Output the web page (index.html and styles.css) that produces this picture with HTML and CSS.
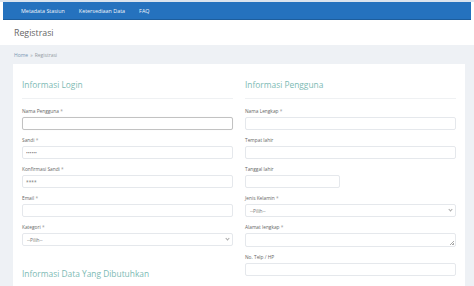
FILE: index.html
```html
<!DOCTYPE html>
<html lang="id">
<head>
    <meta charset="UTF-8">
    <meta name="viewport" content="width=device-width, initial-scale=1.0">
    <title>Registrasi</title>
    <link rel="stylesheet" href="styles.css">
</head>
<body>
    <header class="site-header">
        <nav class="navbar">
            <a class="nav-link" href="#">Metadata Stasiun</a>
            <a class="nav-link" href="#">Ketersediaan Data</a>
            <a class="nav-link" href="#">FAQ</a>
        </nav>
    </header>

    <div class="page-title">
        <h1>Registrasi</h1>
    </div>

    <main class="page-body">
        <div class="breadcrumb">
            <a href="#">Home</a> <span class="sep">»</span> <span>Registrasi</span>
        </div>

        <div class="card">
            <form class="form-grid">
                <!-- kolom kiri -->
                <section class="form-col">
                    <h3 class="section-title">Informasi Login</h3>
                    <div class="field">
                        <label>Nama Pengguna <span class="req">*</span></label>
                        <input class="form-control focused" type="text">
                    </div>
                    <div class="field">
                        <label>Sandi <span class="req">*</span></label>
                        <input class="form-control" type="password" value="123456">
                    </div>
                    <div class="field">
                        <label>Konfirmasi Sandi <span class="req">*</span></label>
                        <input class="form-control" type="password" placeholder="****">
                    </div>
                    <div class="field">
                        <label>Email <span class="req">*</span></label>
                        <input class="form-control" type="email">
                    </div>
                    <div class="field">
                        <label>Kategori <span class="req">*</span></label>
                        <div class="select">--Pilih--</div>
                    </div>
                    <h3 class="section-title next">Informasi Data Yang Dibutuhkan</h3>
                </section>

                <!-- kolom kanan -->
                <section class="form-col">
                    <h3 class="section-title">Informasi Pengguna</h3>
                    <div class="field">
                        <label>Nama Lengkap <span class="req">*</span></label>
                        <input class="form-control" type="text">
                    </div>
                    <div class="field">
                        <label>Tempat lahir</label>
                        <input class="form-control" type="text">
                    </div>
                    <div class="field">
                        <label>Tanggal lahir</label>
                        <input class="form-control short" type="text">
                    </div>
                    <div class="field">
                        <label>Jenis Kelamin <span class="req">*</span></label>
                        <div class="select">--Pilih--</div>
                    </div>
                    <div class="field">
                        <label>Alamat lengkap <span class="req">*</span></label>
                        <div class="textarea"></div>
                    </div>
                    <div class="field">
                        <label>No. Telp / HP</label>
                        <input class="form-control" type="text">
                    </div>
                </section>
            </form>
        </div>
    </main>
</body>
</html>
```

FILE: styles.css
```css
:root {
    --blue: #2572be;
    --blue-dark: #1d5d9c;
    --page-bg: #eef1f5;
    --border: #e5e8ec;
    --text: #666666;
    --teal: #7dbab4;
}

* {
    margin: 0;
    padding: 0;
    box-sizing: border-box;
    font-family: "Open Sans", "Liberation Sans", sans-serif;
}

body {
    background: #ffffff;
    color: var(--text);
    height: 100vh;
    display: flex;
    flex-direction: column;
    overflow: hidden;
}

.site-header {
    border-top: 2px solid #dbe4ee;
    padding: 0 3px;
}

.navbar {
    background: var(--blue);
    border-bottom: 1px solid var(--blue-dark);
    height: 18px;
    display: flex;
    align-items: center;
    gap: 14px;
    padding-left: 18px;
}

.nav-link {
    color: #f2f6fb;
    text-decoration: none;
    font-size: 5.4px;
}

.page-title {
    height: 25px;
    display: flex;
    align-items: center;
    padding-left: 14px;
}

.page-title h1 {
    font-size: 8.8px;
    font-weight: 400;
    color: #666666;
}

.page-body {
    flex: 1;
    min-height: 0;
    background: var(--page-bg);
    padding: 0 9px 0 13px;
    display: flex;
    flex-direction: column;
}

.breadcrumb {
    height: 19px;
    display: flex;
    align-items: center;
    gap: 2px;
    padding-left: 1px;
    font-size: 5px;
    color: #959ca4;
}

.breadcrumb a {
    color: #7895b3;
    text-decoration: none;
}

.card {
    flex: 1;
    min-height: 0;
    overflow: hidden;
    background: #ffffff;
    padding: 14px 9px 0 9px;
}

.form-grid {
    display: grid;
    grid-template-columns: 1fr 1fr;
    gap: 12px;
}

.section-title {
    font-size: 8.4px;
    font-weight: 400;
    color: var(--teal);
    line-height: 14px;
    padding-bottom: 6px;
    border-bottom: 1px solid #eff1f3;
    margin-bottom: 8px;
}

.section-title.next {
    border-bottom: none;
    margin-top: 21px;
}

.field {
    margin-bottom: 6px;
}

.field label {
    display: block;
    font-size: 4.8px;
    line-height: 8px;
    color: #666666;
    margin-bottom: 2px;
}

.req {
    color: #999999;
}

.form-control,
.select,
.textarea {
    display: block;
    width: 100%;
    height: 13px;
    border: 1px solid var(--border);
    border-radius: 2px;
    background: #ffffff;
    font-size: 4.8px;
    color: #777777;
    padding: 0 3px;
    outline: none;
}

.form-control.focused {
    border-color: #c2c2c2;
    box-shadow: 0 0 1px rgba(0, 0, 0, 0.08);
}

.form-control.short {
    width: 95px;
}

.select {
    display: flex;
    align-items: center;
    justify-content: space-between;
    padding: 0 3px 0 4px;
}

.select::after {
    content: "";
    width: 2px;
    height: 2px;
    border-right: 1px solid #aaaaaa;
    border-bottom: 1px solid #aaaaaa;
    transform: rotate(45deg);
    margin-top: -2px;
}

.textarea {
    height: 14px;
    position: relative;
}

.textarea::after {
    content: "";
    position: absolute;
    right: 1px;
    bottom: 1px;
    width: 4px;
    height: 4px;
    background: linear-gradient(135deg, transparent 45%, #aaa 45%, #aaa 55%, transparent 55%, transparent 75%, #aaa 75%);
}
```
